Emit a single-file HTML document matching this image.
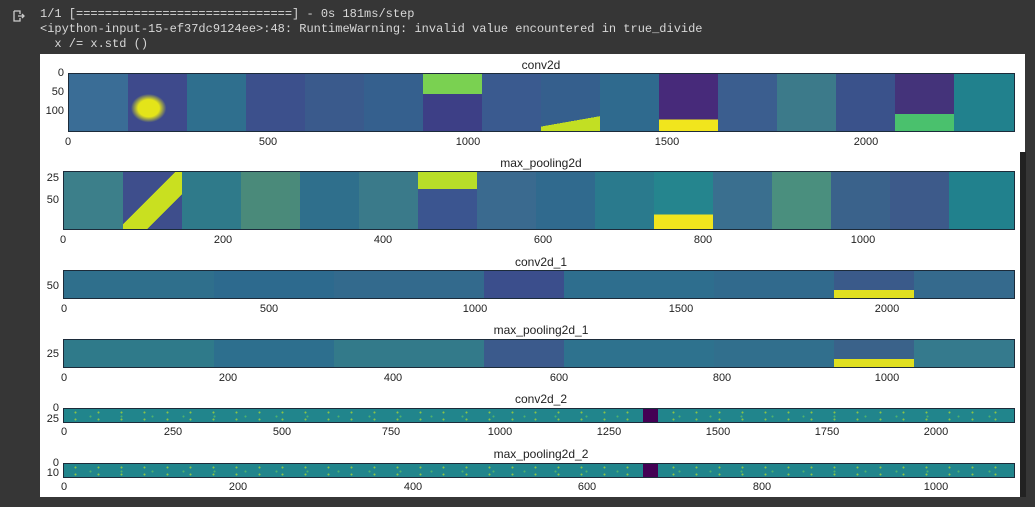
<!DOCTYPE html>
<html><head><meta charset="utf-8"><style>
*{margin:0;padding:0;box-sizing:border-box}
body{width:1035px;height:507px;background:#363636;position:relative;overflow:hidden;font-family:"Liberation Sans",sans-serif}
.mono{position:absolute;left:40px;font-family:"Liberation Mono",monospace;font-size:12px;color:#d8d8d8;white-space:pre}
.panel{position:absolute;background:#fff}
.ax{position:absolute;border:1px solid #1c2b3a;display:flex;overflow:hidden}
.ax>div{height:100%;flex:none;background-size:100% 100%;background-repeat:no-repeat}
.t{position:absolute;font-size:11px;color:#222;transform:translateX(-50%)}
.y{position:absolute;font-size:11px;color:#222;text-align:right;width:30px}
.speck{background-color:#21858c;background-image:radial-gradient(circle,rgba(181,222,43,.7) 0 .8px,transparent 1.2px),radial-gradient(circle,rgba(110,206,88,.6) 0 .8px,transparent 1.2px);background-size:23px 7px,31px 9px;background-position:0 0,11px 3px}
</style></head><body>
<svg style="position:absolute;left:13px;top:10px" width="12" height="12" viewBox="0 0 12 12"><path d="M1 1h6v3M1 1v10h6v-3M5 6h6M9 4l2 2-2 2" fill="none" stroke="#ccc" stroke-width="1.3"/></svg>
<div class="mono" style="top:7px">1/1 [==============================] - 0s 181ms/step</div>
<div class="mono" style="top:22px">&lt;ipython-input-15-ef37dc9124ee&gt;:48: RuntimeWarning: invalid value encountered in true_divide</div>
<div class="mono" style="top:37px">  x /= x.std ()</div>
<div class="panel" style="left:40px;top:54px;width:985px;height:98px"></div>
<div style="position:absolute;left:1020px;top:152px;width:6px;height:345px;background:#222"></div>
<div class="panel" style="left:40px;top:152px;width:980px;height:345px"></div>

<!-- row1 conv2d -->
<div class="t" style="left:541px;top:58px;font-size:12px">conv2d</div>
<div class="ax" style="left:68px;top:73px;width:947px;height:59px">
<div style="width:59px;background-color:#3a6d96"></div>
<div style="width:59px;background-color:#3e4a8c;background-image:radial-gradient(ellipse 30% 25% at 35% 60%,#e4e419 0 60%,transparent 100%)"></div>
<div style="width:59px;background-color:#2f6f8e"></div>
<div style="width:59px;background-color:#3c508c"></div>
<div style="width:59px;background-color:#3a5a8c"></div>
<div style="width:59px;background-color:#35608e"></div>
<div style="width:59px;background-color:#3d3f86;background-image:linear-gradient(180deg,#7ad151 0 35%,transparent 35%)"></div>
<div style="width:59px;background-color:#3a5a8f"></div>
<div style="width:59px;background-color:#355f8d;background-image:linear-gradient(170deg,transparent 78%,#c2df23 78%)"></div>
<div style="width:59px;background-color:#2f6a8e"></div>
<div style="width:59px;background-color:#472a7a;background-image:linear-gradient(180deg,transparent 80%,#f1e51d 80%)"></div>
<div style="width:59px;background-color:#3b5e8f"></div>
<div style="width:59px;background-color:#3c7a8a"></div>
<div style="width:59px;background-color:#3a528b"></div>
<div style="width:59px;background-color:#44337a;background-image:linear-gradient(180deg,transparent 70%,#4ac16d 70%)"></div>
<div style="flex:1;background:#21818d"></div>
</div>
<div class="y" style="left:34px;top:67px">0</div><div class="y" style="left:34px;top:86px">50</div><div class="y" style="left:34px;top:105px">100</div>
<div class="t" style="left:68px;top:136px">0</div><div class="t" style="left:268px;top:136px">500</div><div class="t" style="left:468px;top:136px">1000</div><div class="t" style="left:667px;top:136px">1500</div><div class="t" style="left:866px;top:136px">2000</div>

<!-- row2 max_pooling2d -->
<div class="t" style="left:541px;top:156px;font-size:12px">max_pooling2d</div>
<div class="ax" style="left:63px;top:171px;width:952px;height:59px">
<div style="width:59px;background-color:#3c7f8a"></div>
<div style="width:59px;background-color:#3e4e8c;background-image:linear-gradient(135deg,transparent 45%,#c9e020 45% 70%,transparent 70%)"></div>
<div style="width:59px;background-color:#2f7a8a"></div>
<div style="width:59px;background-color:#4a8a7a"></div>
<div style="width:59px;background-color:#2f6f8c"></div>
<div style="width:59px;background-color:#3a7a8a"></div>
<div style="width:59px;background-color:#3b5590;background-image:linear-gradient(180deg,#b8de29 0 30%,transparent 30%)"></div>
<div style="width:59px;background-color:#3a6a8f"></div>
<div style="width:59px;background-color:#306a8e"></div>
<div style="width:59px;background-color:#2a7a8d"></div>
<div style="width:59px;background-color:#25858e;background-image:linear-gradient(180deg,transparent 75%,#f1e51d 75%)"></div>
<div style="width:59px;background-color:#3a6f8f"></div>
<div style="width:59px;background-color:#4a8f7e"></div>
<div style="width:59px;background-color:#3a628b"></div>
<div style="width:59px;background-color:#3d5a8a"></div>
<div style="flex:1;background:#21818d"></div>
</div>
<div class="y" style="left:29px;top:172px">25</div><div class="y" style="left:29px;top:194px">50</div>
<div class="t" style="left:63px;top:234px">0</div><div class="t" style="left:223px;top:234px">200</div><div class="t" style="left:383px;top:234px">400</div><div class="t" style="left:543px;top:234px">600</div><div class="t" style="left:703px;top:234px">800</div><div class="t" style="left:863px;top:234px">1000</div>

<!-- row3 conv2d_1 -->
<div class="t" style="left:541px;top:255px;font-size:12px">conv2d_1</div>
<div class="ax" style="left:63px;top:270px;width:952px;height:29px">
<div style="width:150px;background-color:#2f6f8c"></div><div style="width:120px;background-color:#2d6a8e"></div><div style="width:150px;background-color:#336a8d"></div><div style="width:80px;background-color:#3b4e8c"></div><div style="width:150px;background-color:#2e6e8e"></div><div style="width:120px;background-color:#316a8d"></div><div style="width:80px;background-color:#3a5a8a;background-image:linear-gradient(180deg,transparent 70%,#e0e020 70%)"></div><div style="flex:1;background-color:#356a8d"></div>
</div>
<div class="y" style="left:29px;top:280px">50</div>
<div class="t" style="left:64px;top:303px">0</div><div class="t" style="left:269px;top:303px">500</div><div class="t" style="left:475px;top:303px">1000</div><div class="t" style="left:681px;top:303px">1500</div><div class="t" style="left:887px;top:303px">2000</div>

<!-- row4 max_pooling2d_1 -->
<div class="t" style="left:541px;top:323px;font-size:12px">max_pooling2d_1</div>
<div class="ax" style="left:63px;top:339px;width:952px;height:29px">
<div style="width:150px;background-color:#2f7a8a"></div><div style="width:120px;background-color:#2d6f8e"></div><div style="width:150px;background-color:#337a8a"></div><div style="width:80px;background-color:#3b5a8c"></div><div style="width:150px;background-color:#2e728e"></div><div style="width:120px;background-color:#316f8d"></div><div style="width:80px;background-color:#3a628a;background-image:linear-gradient(180deg,transparent 70%,#e0e020 70%)"></div><div style="flex:1;background-color:#357a8d"></div>
</div>
<div class="y" style="left:29px;top:348px">25</div>
<div class="t" style="left:64px;top:372px">0</div><div class="t" style="left:228px;top:372px">200</div><div class="t" style="left:393px;top:372px">400</div><div class="t" style="left:559px;top:372px">600</div><div class="t" style="left:722px;top:372px">800</div><div class="t" style="left:887px;top:372px">1000</div>

<!-- row5 conv2d_2 -->
<div class="t" style="left:541px;top:392px;font-size:12px">conv2d_2</div>
<div class="ax speck" style="left:63px;top:408px;width:952px;height:15px"><div style="position:absolute;left:579px;top:0;width:15px;height:100%;background:#440154"></div></div>
<div class="y" style="left:29px;top:402px">0</div><div class="y" style="left:29px;top:413px">25</div>
<div class="t" style="left:64px;top:426px">0</div><div class="t" style="left:173px;top:426px">250</div><div class="t" style="left:282px;top:426px">500</div><div class="t" style="left:391px;top:426px">750</div><div class="t" style="left:500px;top:426px">1000</div><div class="t" style="left:609px;top:426px">1250</div><div class="t" style="left:718px;top:426px">1500</div><div class="t" style="left:827px;top:426px">1750</div><div class="t" style="left:936px;top:426px">2000</div>

<!-- row6 max_pooling2d_2 -->
<div class="t" style="left:541px;top:447px;font-size:12px">max_pooling2d_2</div>
<div class="ax speck" style="left:63px;top:463px;width:952px;height:15px"><div style="position:absolute;left:579px;top:0;width:15px;height:100%;background:#440154"></div></div>
<div class="y" style="left:29px;top:457px">0</div><div class="y" style="left:29px;top:467px">10</div>
<div class="t" style="left:64px;top:481px">0</div><div class="t" style="left:238px;top:481px">200</div><div class="t" style="left:413px;top:481px">400</div><div class="t" style="left:587px;top:481px">600</div><div class="t" style="left:762px;top:481px">800</div><div class="t" style="left:936px;top:481px">1000</div>
</body></html>
